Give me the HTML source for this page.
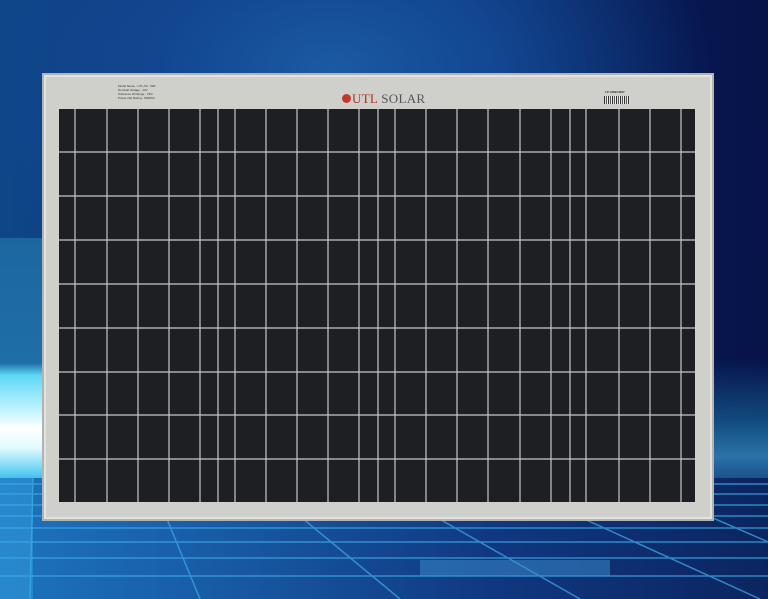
<!DOCTYPE html>
<html><head><style>
html,body{margin:0;padding:0}
body{width:768px;height:599px;overflow:hidden;position:relative;
background:radial-gradient(ellipse 380px 240px at 330px 70px,#1b5aa3 0%,#124690 45%,rgba(10,40,110,0) 100%),linear-gradient(90deg,#0e4688 0%,#0b377a 40%,#081f5a 70%,#07134a 100%);
font-family:"Liberation Sans",sans-serif}
.lband{position:absolute;left:0;top:238px;width:60px;height:250px;background:linear-gradient(180deg,#1d67a0 0%,#1e6ea8 50%,#5fd8f5 55%,#c8f6ff 70%,#ffffff 76%,#e0fbff 84%,#4fc8f0 95%,#2a8fd0 100%)}
.rband{position:absolute;left:700px;top:360px;width:68px;height:120px;background:linear-gradient(180deg,rgba(10,30,80,0) 0%,#114a7e 50%,#2a73a8 80%,#1a4f8a 100%)}
.floor{position:absolute;left:0;top:478px;width:768px;height:121px;background:linear-gradient(90deg,#1c74bd 0%,#17549f 35%,#103780 65%,#0b2560 100%)}
.frame{position:absolute;left:42px;top:73px;width:672px;height:448px;background:#cfd0cc;box-shadow:inset 0 0 0 2px #b3b4b0,inset 0 0 0 4px #e2e2de}
.cells{position:absolute;left:59px;top:109px;width:636px;height:393px;background:#1e1f23}
.lbl{position:absolute;font-size:3px;color:#333;line-height:4px}
</style></head><body>
<div class="lband"></div>
<div class="rband"></div>
<div class="floor">
<svg width="768" height="121" style="position:absolute;left:0;top:0">
<g stroke="#3aa8e4" stroke-width="1.5" opacity="0.75">
<line x1="0" y1="6" x2="768" y2="6"/><line x1="0" y1="16" x2="768" y2="16"/><line x1="0" y1="27" x2="768" y2="27"/><line x1="0" y1="38" x2="768" y2="38"/><line x1="0" y1="50" x2="768" y2="50"/><line x1="0" y1="64" x2="768" y2="64"/><line x1="0" y1="80" x2="768" y2="80"/><line x1="0" y1="98" x2="768" y2="98"/>
<line x1="33" y1="0" x2="30" y2="121"/><line x1="150" y1="0" x2="200" y2="121"/><line x1="290" y1="30" x2="400" y2="121"/><line x1="420" y1="30" x2="580" y2="121"/><line x1="560" y1="30" x2="760" y2="121"/><line x1="690" y1="30" x2="900" y2="121"/>
</g>
<rect x="420" y="82" width="190" height="16" fill="#3b8fd0" opacity="0.5"/>
<rect x="0" y="0" width="33" height="121" fill="#3fb0ea" opacity="0.35"/>
</svg>
</div>
<div class="frame">
<div class="lbl" style="left:76px;top:11px">Model Name : UTL-60 · 50P<br>Nominal Voltage : 12V<br>Tolerance W Range : ±3%<br>Power (W) Rating : 50W/60</div>
<div style="position:absolute;left:300px;top:21px;width:9px;height:9px;border-radius:50%;background:#c0392b"></div>
<div style="position:absolute;left:310px;top:18px;font-family:'Liberation Serif',serif;font-size:13px;letter-spacing:0.3px"><span style="color:#b03020">UTL</span> <span style="color:#555">SOLAR</span></div>
<div class="lbl" style="left:563px;top:17px;font-weight:bold">LP-UDB04667</div>
<div style="position:absolute;left:562px;top:23px;width:26px;height:8px;background:repeating-linear-gradient(90deg,#333 0 1px,#ddd 1px 2px,#555 2px 3px,#eee 3px 4px)"></div>
</div>
<div class="cells">
<svg width="636" height="393" style="position:absolute;left:0;top:0">
<g stroke="#c8c8c8" stroke-width="1.2">
<line x1="16" y1="0" x2="16" y2="393"/><line x1="48" y1="0" x2="48" y2="393"/><line x1="79" y1="0" x2="79" y2="393"/><line x1="110" y1="0" x2="110" y2="393"/><line x1="141" y1="0" x2="141" y2="393"/><line x1="159" y1="0" x2="159" y2="393"/><line x1="176" y1="0" x2="176" y2="393"/><line x1="207" y1="0" x2="207" y2="393"/><line x1="238" y1="0" x2="238" y2="393"/><line x1="269" y1="0" x2="269" y2="393"/><line x1="300" y1="0" x2="300" y2="393"/><line x1="319" y1="0" x2="319" y2="393"/><line x1="336" y1="0" x2="336" y2="393"/><line x1="367" y1="0" x2="367" y2="393"/><line x1="398" y1="0" x2="398" y2="393"/><line x1="429" y1="0" x2="429" y2="393"/><line x1="461" y1="0" x2="461" y2="393"/><line x1="492" y1="0" x2="492" y2="393"/><line x1="511" y1="0" x2="511" y2="393"/><line x1="527" y1="0" x2="527" y2="393"/><line x1="560" y1="0" x2="560" y2="393"/><line x1="591" y1="0" x2="591" y2="393"/><line x1="622" y1="0" x2="622" y2="393"/>
<line x1="0" y1="43" x2="636" y2="43"/><line x1="0" y1="87" x2="636" y2="87"/><line x1="0" y1="131" x2="636" y2="131"/><line x1="0" y1="175" x2="636" y2="175"/><line x1="0" y1="219" x2="636" y2="219"/><line x1="0" y1="263" x2="636" y2="263"/><line x1="0" y1="306" x2="636" y2="306"/><line x1="0" y1="350" x2="636" y2="350"/>
</g>
</svg>
</div>
</body></html>
